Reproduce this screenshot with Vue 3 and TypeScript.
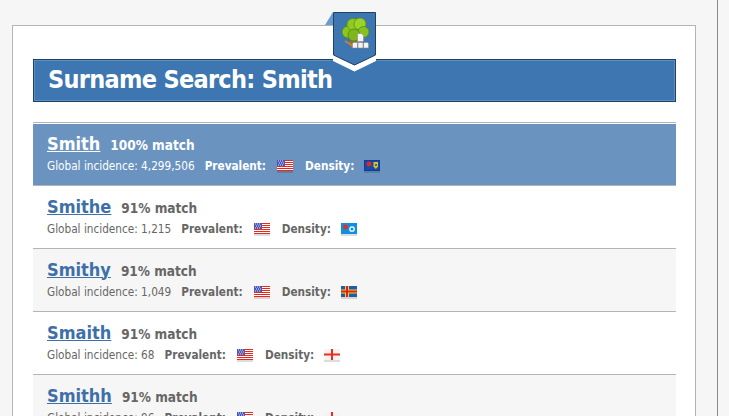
<script setup lang="ts">
interface Row { name: string; match: string; count: string; prevalent: string; density: string; alt: boolean; active: boolean }
const rows: Row[] = [
  { name: 'Smith', match: '100% match', count: '4,299,506', prevalent: 'us', density: 'ky', alt: false, active: true },
  { name: 'Smithe', match: '91% match', count: '1,215', prevalent: 'us', density: 'tv', alt: false, active: false },
  { name: 'Smithy', match: '91% match', count: '1,049', prevalent: 'us', density: 'ax', alt: true, active: false },
  { name: 'Smaith', match: '91% match', count: '68', prevalent: 'us', density: 'en', alt: false, active: false },
  { name: 'Smithh', match: '91% match', count: '96', prevalent: 'us', density: 'en', alt: true, active: false },
]
const stripes = [0, 2, 4, 6, 8, 10]
</script>

<template>
  <div class="page">
    <section class="panel">
      <div class="tab">
        <span class="fold"></span>
        <svg class="badge" width="44" height="60" viewBox="0 0 44 60">
          <path d="M0 43 L21.5 53 L43 43 L43 49 L21.5 59.5 L0 49 Z" fill="#fff" />
          <path d="M0.5 0.5 H42.5 V43 L21.5 53 L0.5 43 Z" fill="#3d76b0" stroke="#1f4067" />
          <g>
            <path d="M16 29 L18.5 36 H23 L23 28 Z" fill="#a86a28" />
            <path d="M12 29 L20 34 M29 27 L22 33" stroke="#c58438" stroke-width="1.5" fill="none" />
            <circle cx="22" cy="17" r="9" fill="#8cc61c" />
            <circle cx="15" cy="20" r="6" fill="#8cc61c" stroke="#55881a" stroke-width=".8" />
            <circle cx="20" cy="12.5" r="6" fill="#8fca20" stroke="#5c9019" stroke-width=".8" />
            <circle cx="27" cy="12" r="6" fill="#9ad428" stroke="#5c9019" stroke-width=".8" />
            <circle cx="30.5" cy="20" r="5.5" fill="#86c11c" stroke="#55881a" stroke-width=".8" />
            <circle cx="21" cy="23" r="6" fill="#7db818" stroke="#55881a" stroke-width=".8" />
            <path d="M24.5 21.5 h4 l2 2 v6 h-6 Z" fill="#f4f4f4" stroke="#8a8a8a" stroke-width=".6" />
            <path d="M20.5 30.5 h4 v5.5 h-5 v-4.5 Z M26 30.5 h4 v5.5 h-5 v-4.5 Z M31.5 30.5 h3 l1 1 v4.5 h-5 v-4.5 Z" fill="#f4f4f4" stroke="#8a8a8a" stroke-width=".6" />
          </g>
        </svg>
      </div>
      <header class="banner"><h1>Surname Search: Smith</h1></header>
      <ul class="results">
        <li v-for="r in rows" :key="r.name" class="row" :class="{ alt: r.alt, active: r.active }">
          <div class="title"><a class="name">{{ r.name }}</a><b class="match">{{ r.match }}</b></div>
          <div class="meta">
            <span>Global incidence: {{ r.count }}</span>
            <b>Prevalent:</b>
            <svg class="flag prev" width="16" height="13" viewBox="0 0 16 13">
              <rect y="11" width="16" height="2" fill="#00000022" />
              <rect width="16" height="11" fill="#fff" />
              <rect v-for="s in stripes" :key="s" :y="s" width="16" height="1" fill="#e8261c" />
              <rect width="8" height="6" fill="#4a57b5" />
              <path d="M1 1h1M3 1h1M5 1h1M2 3h1M4 3h1M6 3h1M1 5h1M3 5h1M5 5h1" stroke="#dfe4ff" stroke-width="1" />
            </svg>
            <b>Density:</b>
            <svg class="flag" width="16" height="13" viewBox="0 0 16 13">
              <rect y="11" width="16" height="2" fill="#00000022" />
              <template v-if="r.density === 'ky'">
                <rect width="16" height="11" fill="#16379a" />
                <rect x="1" y="1" width="14" height="9" fill="#1a4aa8" />
                <circle cx="5" cy="4" r="2.4" fill="#e8281c" />
                <path d="M9.5 2h4.5v4.5l-2.2 2.5-2.3-2.5Z" fill="#d8c02a" />
                <path d="M11 4h2v2h-2Z" fill="#3a7a50" />
              </template>
              <template v-else-if="r.density === 'tv'">
                <rect width="16" height="11" fill="#0f8fe0" />
                <circle cx="4.5" cy="4" r="2.4" fill="#f02a1c" />
                <circle cx="11" cy="6" r="2.2" fill="none" stroke="#fff" stroke-width="1.3" />
              </template>
              <template v-else-if="r.density === 'ax'">
                <rect width="16" height="11" fill="#1f5cb0" />
                <rect x="4" width="4" height="11" fill="#f2cf2a" />
                <rect y="3.5" width="16" height="4" fill="#f2cf2a" />
                <rect x="5" width="2" height="11" fill="#d8241c" />
                <rect y="4.5" width="16" height="2" fill="#d8241c" />
              </template>
              <template v-else>
                <rect width="16" height="11" fill="#f4f4f4" />
                <rect x="7" width="2" height="11" fill="#ee2a1c" />
                <rect y="4.5" width="16" height="2" fill="#ee2a1c" />
              </template>
            </svg>
          </div>
        </li>
      </ul>
    </section>
  </div>
</template>

<style scoped>
.page {
  box-sizing: border-box;
  width: 718px;
  height: 416px;
  padding: 25px 21px 0 12px;
  background: #f6f6f6;
  border-right: 1px solid #8c8c8c;
  overflow: hidden;
  font-family: "DejaVu Sans Condensed", "DejaVu Sans", sans-serif;
  font-stretch: condensed;
  color: #666;
}
.panel {
  position: relative;
  box-sizing: border-box;
  height: 500px;
  padding: 33px 19px 0 20px;
  background: #fff;
  border: 1px solid #b4b4b4;
}
.tab {
  position: absolute;
  left: 320px;
  top: -14px;
  z-index: 1;
}
.fold {
  position: absolute;
  left: -8px;
  top: 0;
  width: 0;
  height: 0;
  border-style: solid;
  border-width: 0 0 13px 8px;
  border-color: transparent transparent #6a9ad0 transparent;
}
.badge { display: block; }
.banner {
  box-sizing: border-box;
  height: 43px;
  background: #3d76b0;
  border: 1px solid #1f4067;
  box-shadow: inset 0 0 0 1px #5a8fc4;
  padding: 0 14px;
}
h1 {
  margin: 0;
  font-size: 25px;
  line-height: 40px;
  font-weight: 700;
  letter-spacing: -0.7px;
  color: #fff;
}
.results {
  list-style: none;
  margin: 20px 0 0;
  padding: 1px 0 0;
  border-top: 1px solid #b4b4b4;
}
.row {
  box-sizing: border-box;
  height: 63px;
  padding: 9px 14px 0;
  border-bottom: 1px solid #b4b4b4;
}
.row.alt { background: #f6f6f6; }
.row.active {
  height: 62px;
  padding-top: 8px;
  background: #6a94bf;
  color: #fff;
}
.title { display: flex; align-items: baseline; gap: 10px; height: 25px; }
.name {
  font-size: 18px;
  line-height: 24px;
  font-weight: 700;
  color: #3d6fa8;
  text-decoration: underline;
  text-decoration-thickness: 1px;
}
.active .name { color: #fff; }
.match { font-size: 13.5px; font-weight: 700; }
.meta {
  display: flex;
  align-items: center;
  gap: 10px;
  height: 18px;
  font-size: 11.7px;
}
.flag { display: block; margin-top: 1px; }
.flag.prev { margin-left: 1px; margin-right: 2px; }
</style>

<style>
html, body { overflow: hidden; background: #f6f6f6; }
</style>
